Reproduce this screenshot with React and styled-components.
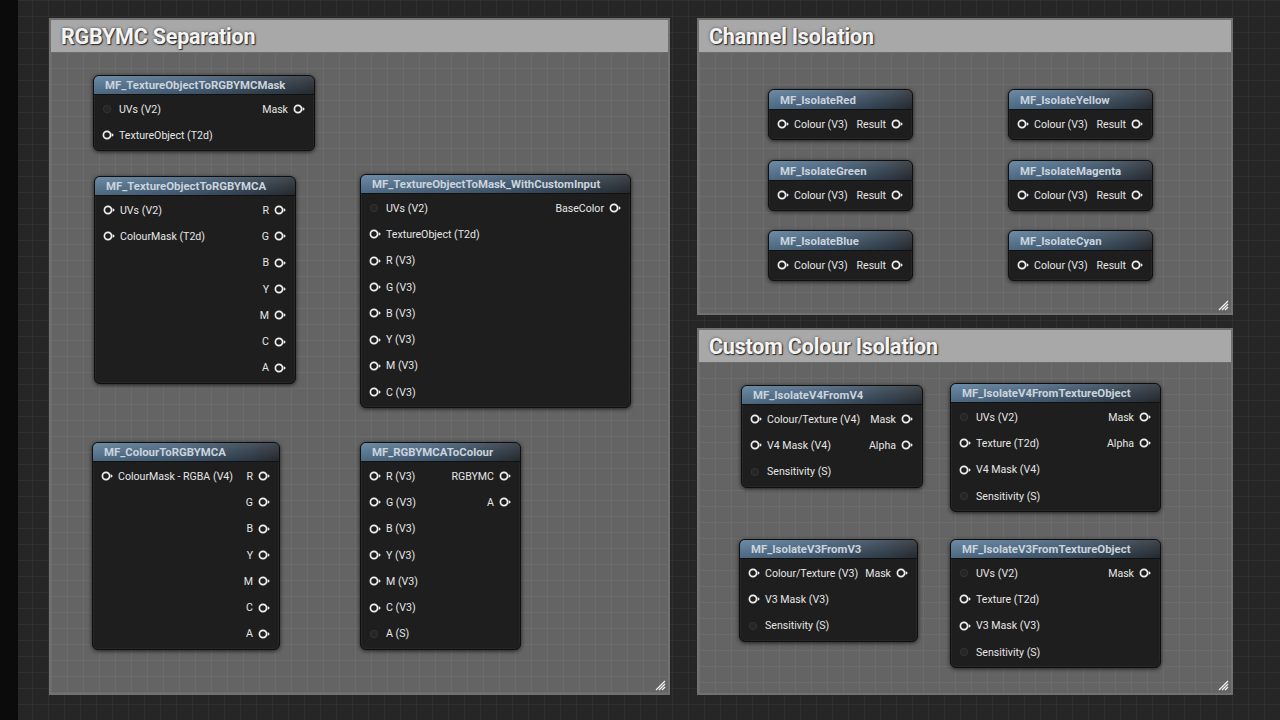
import React from 'react'
import styled, { createGlobalStyle } from 'styled-components'

const GlobalStyle = createGlobalStyle`
  html, body {
    margin: 0;
    padding: 0;
    background: #0b0b0b;
  }
  body {
    font-family: Roboto, 'Liberation Sans', sans-serif;
  }
`

const Canvas = styled.div`
  position: relative;
  width: 1280px;
  height: 720px;
  overflow: hidden;
  background-color: #262626;
  background-image:
    linear-gradient(to right, #0b0b0b 0, #0b0b0b 18px, transparent 18px),
    repeating-linear-gradient(to right, #2f2f2f 0 1px, transparent 1px 16px),
    repeating-linear-gradient(to bottom, #2f2f2f 0 1px, transparent 1px 16px);
`

const Comment = styled.div`
  position: absolute;
  left: ${p => p.$x}px;
  top: ${p => p.$y}px;
  width: ${p => p.$w}px;
  height: ${p => p.$h}px;
  box-sizing: border-box;
  border: 2px solid #717171;
  background-color: #646464;
  background-image:
    repeating-linear-gradient(to right, #6c6c6c 0 1px, transparent 1px 16px),
    repeating-linear-gradient(to bottom, #6c6c6c 0 1px, transparent 1px 16px);
  display: flex;
  flex-direction: column;
`

const CommentHeader = styled.div`
  height: 32px;
  background: #a8a8a8;
  display: flex;
  align-items: center;
  padding-left: 10px;
  color: #f4f4f4;
  font-size: 21.5px;
  font-weight: 700;
  letter-spacing: -0.2px;
  text-shadow: 1px 1px 1px #2a2a2a, 0 0 3px rgba(0, 0, 0, 0.55);
`

const Grip = styled.svg`
  position: absolute;
  right: 2px;
  bottom: 2px;
`

const Node = styled.div`
  position: absolute;
  left: ${p => p.$x}px;
  top: ${p => p.$y}px;
  width: ${p => p.$w}px;
  box-sizing: border-box;
  background: #1e1e1e;
  border: 1px solid #0f0f0f;
  border-radius: 6px;
  box-shadow: 0 1px 4px rgba(0, 0, 0, 0.7), inset 0 0 0 1px rgba(255, 255, 255, 0.04);
  overflow: hidden;
  padding-bottom: 2px;
`

const NodeHeader = styled.div`
  height: ${p => p.$h || 18}px;
  display: flex;
  align-items: center;
  padding-left: 11px;
  color: #c9d4de;
  font-size: 11.4px;
  font-weight: 700;
  white-space: nowrap;
  background:
    linear-gradient(to bottom, rgba(255, 255, 255, 0.1), rgba(0, 0, 0, 0.18)),
    linear-gradient(to right, #5d7f9c 0%, #4a6580 45%, #34424f 85%, #2c3138 100%);
  border-bottom: 1px solid #111;
`

const NodeBody = styled.div`
  padding-top: 1px;
  display: flex;
  flex-direction: column;
`

const Row = styled.div`
  height: ${p => p.$h}px;
  display: flex;
  align-items: center;
  justify-content: space-between;
  color: #e6e6e6;
  font-size: 10.6px;
  white-space: nowrap;
`

const Port = styled.div`
  display: flex;
  align-items: center;
  gap: 5px;
  padding-left: ${p => (p.$out ? 0 : 8)}px;
  padding-right: ${p => (p.$out ? 9 : 0)}px;
`

const PinIcon = styled.svg`
  flex: none;
  display: block;
`

const Pin = ({ dim }) => (
  <PinIcon width="12" height="10" viewBox="0 0 12 10">
    {dim ? (
      <circle cx="5" cy="5" r="3.7" fill="#262626" stroke="#333" strokeWidth="1" />
    ) : (
      <>
        <circle cx="5" cy="5" r="3.6" fill="none" stroke="#efefef" strokeWidth="1.7" />
        <path d="M9.7 3 L11.9 5 L9.7 7 Z" fill="#efefef" />
      </>
    )}
  </PinIcon>
)

const i = (t, dim) => ({ t, dim })

const NodeBox = ({ x, y, w, title, ins = [], outs = [], rowH = 26.3, headH }) => {
  const n = Math.max(ins.length, outs.length)
  const rows = Array.from({ length: n }, (_, k) => [ins[k], outs[k]])
  return (
    <Node $x={x} $y={y} $w={w}>
      <NodeHeader $h={headH}>{title}</NodeHeader>
      <NodeBody>
        {rows.map(([a, b], k) => (
          <Row key={k} $h={rowH}>
            {a ? (
              <Port>
                <Pin dim={a.dim} />
                <span>{a.t}</span>
              </Port>
            ) : (
              <span />
            )}
            {b ? (
              <Port $out>
                <span>{b}</span>
                <Pin />
              </Port>
            ) : null}
          </Row>
        ))}
      </NodeBody>
    </Node>
  )
}

const GripIcon = () => (
  <Grip width="12" height="12" viewBox="0 0 12 12">
    <g stroke="#f2f2f2" strokeWidth="1.2">
      <line x1="11" y1="2" x2="2" y2="11" />
      <line x1="11" y1="5" x2="5" y2="11" />
      <line x1="11" y1="8" x2="8" y2="11" />
    </g>
  </Grip>
)

const comments = [
  { x: 49, y: 18, w: 621, h: 677, title: 'RGBYMC Separation' },
  { x: 697, y: 18, w: 536, h: 297, title: 'Channel Isolation' },
  { x: 697, y: 328, w: 536, h: 367, title: 'Custom Colour Isolation' }
]

const rgbymca = ['R', 'G', 'B', 'Y', 'M', 'C', 'A']
const v3 = ['R (V3)', 'G (V3)', 'B (V3)', 'Y (V3)', 'M (V3)', 'C (V3)'].map(t => i(t))

const nodes = [
  {
    x: 93, y: 75, w: 222, rowH: 26,
    title: 'MF_TextureObjectToRGBYMCMask',
    ins: [i('UVs (V2)', true), i('TextureObject (T2d)')],
    outs: ['Mask']
  },
  {
    x: 94, y: 176, w: 202,
    title: 'MF_TextureObjectToRGBYMCA',
    ins: [i('UVs (V2)'), i('ColourMask (T2d)')],
    outs: rgbymca
  },
  {
    x: 360, y: 174, w: 271,
    title: 'MF_TextureObjectToMask_WithCustomInput',
    ins: [i('UVs (V2)', true), i('TextureObject (T2d)'), ...v3],
    outs: ['BaseColor']
  },
  {
    x: 92, y: 442, w: 188,
    title: 'MF_ColourToRGBYMCA',
    ins: [i('ColourMask - RGBA (V4)')],
    outs: rgbymca
  },
  {
    x: 360, y: 442, w: 161,
    title: 'MF_RGBYMCAToColour',
    ins: [...v3, i('A (S)', true)],
    outs: ['RGBYMC', 'A']
  },
  ...[
    ['MF_IsolateRed', 768, 89],
    ['MF_IsolateGreen', 768, 160],
    ['MF_IsolateBlue', 768, 230],
    ['MF_IsolateYellow', 1008, 89],
    ['MF_IsolateMagenta', 1008, 160],
    ['MF_IsolateCyan', 1008, 230]
  ].map(([title, x, y]) => ({
    x, y, w: 145, title, headH: 19, rowH: 26,
    ins: [i('Colour (V3)')],
    outs: ['Result']
  })),
  {
    x: 741, y: 385, w: 182,
    title: 'MF_IsolateV4FromV4',
    ins: [i('Colour/Texture (V4)'), i('V4 Mask (V4)'), i('Sensitivity (S)', true)],
    outs: ['Mask', 'Alpha']
  },
  {
    x: 950, y: 383, w: 211,
    title: 'MF_IsolateV4FromTextureObject',
    ins: [i('UVs (V2)', true), i('Texture (T2d)'), i('V4 Mask (V4)'), i('Sensitivity (S)', true)],
    outs: ['Mask', 'Alpha']
  },
  {
    x: 739, y: 539, w: 179,
    title: 'MF_IsolateV3FromV3',
    ins: [i('Colour/Texture (V3)'), i('V3 Mask (V3)'), i('Sensitivity (S)', true)],
    outs: ['Mask']
  },
  {
    x: 950, y: 539, w: 211,
    title: 'MF_IsolateV3FromTextureObject',
    ins: [i('UVs (V2)', true), i('Texture (T2d)'), i('V3 Mask (V3)'), i('Sensitivity (S)', true)],
    outs: ['Mask']
  }
]

const App = () => {
  return (
    <>
      <GlobalStyle />
      <Canvas>
        {comments.map(c => (
          <Comment key={c.title} $x={c.x} $y={c.y} $w={c.w} $h={c.h}>
            <CommentHeader>{c.title}</CommentHeader>
            <GripIcon />
          </Comment>
        ))}
        {nodes.map(n => (
          <NodeBox key={n.title} {...n} />
        ))}
      </Canvas>
    </>
  )
}

export default App
